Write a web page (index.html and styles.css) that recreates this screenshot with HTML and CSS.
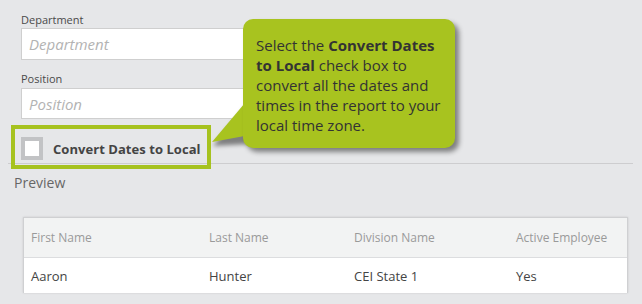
FILE: index.html
```html
<!DOCTYPE html>
<html>
<head>
<meta charset="utf-8">
<link rel="stylesheet" href="styles.css">
</head>
<body>
<div class="page">
  <div class="form">
    <label class="field-label">Department</label>
    <div class="input placeholder">Department</div>
    <label class="field-label second">Position</label>
    <div class="input placeholder short">Position</div>
    <div class="check-row">
      <span class="checkbox"></span>
      <span class="check-label">Convert Dates to Local</span>
    </div>
  </div>
  <div class="divider"></div>
  <div class="preview-title">Preview</div>
  <div class="card">
    <div class="grid head">
      <div>First Name</div>
      <div>Last Name</div>
      <div>Division Name</div>
      <div>Active Employee</div>
    </div>
    <div class="grid row">
      <div>Aaron</div>
      <div>Hunter</div>
      <div>CEI State 1</div>
      <div>Yes</div>
    </div>
  </div>
</div>

<div class="highlight"></div>
<svg class="tail" width="60" height="70" viewBox="0 0 60 70">
  <defs>
    <filter id="blur" x="-50%" y="-50%" width="200%" height="200%">
      <feGaussianBlur stdDeviation="2"/>
    </filter>
  </defs>
  <polygon points="13,54 50,10 50,52" fill="rgba(0,0,0,0.45)" filter="url(#blur)"/>
  <polygon points="12,50 50,5 50,43" fill="#a8c31f"/>
</svg>
<div class="tooltip">Select the <b>Convert Dates to Local</b> check box to convert all the dates and times in the report to your local time zone.</div>
</body>
</html>
```

FILE: styles.css
```css
html, body {
  margin: 0;
  padding: 0;
  background: #e6e7e9;
  font-family: "Open Sans", "DejaVu Sans", sans-serif;
  width: 642px;
  height: 304px;
  overflow: hidden;
}

.page {
  padding: 0 9px 0 8px;
}

.form {
  padding: 13px 0 0 13px;
  display: flex;
  flex-direction: column;
  align-items: flex-start;
}

.field-label {
  font-size: 11px;
  line-height: 14px;
  height: 14px;
  color: #4a4a4a;
  margin-bottom: 1px;
}

.field-label.second {
  margin-top: 12px;
  margin-bottom: 2px;
}

.input {
  box-sizing: border-box;
  width: 410px;
  height: 32px;
  background: #fff;
  border: 1px solid #cfcfcf;
  padding: 0 7px;
  display: flex;
  align-items: center;
}

.input.short {
  height: 31px;
}

.placeholder {
  font-size: 15px;
  font-style: italic;
  color: #b3b3b3;
}

.check-row {
  margin-top: 18px;
  display: flex;
  align-items: center;
  height: 23px;
}

.checkbox {
  box-sizing: border-box;
  width: 22px;
  height: 23px;
  border: 4px solid #c2c3c5;
  background: #fff;
}

.check-label {
  margin-left: 10px;
  font-size: 13px;
  font-weight: bold;
  color: #444;
  letter-spacing: 0.05px;
}

.divider {
  margin-top: 3px;
  height: 1px;
  background: #cdcdcf;
}

.preview-title {
  margin-top: 9px;
  padding-left: 6px;
  font-size: 14px;
  line-height: 20px;
  color: #666;
}

.card {
  margin: 24px 5px 0 15px;
  background: #fff;
  border: 1px solid #cfd0d2;
  border-bottom: none;
  box-shadow: 0 0 2px rgba(0, 0, 0, 0.12);
}

.grid {
  display: grid;
  grid-template-columns: 178px 145px 162px 1fr;
  padding-left: 7px;
  align-items: center;
}

.head {
  height: 39px;
  background: #f2f3f3;
  border-bottom: 1px solid #dcdddf;
  font-size: 12px;
  color: #9a9a9a;
}

.row {
  height: 35px;
  font-size: 13px;
  color: #444;
}

.highlight {
  position: absolute;
  left: 11px;
  top: 125px;
  width: 192px;
  height: 36px;
  border: 4px solid #a6c21f;
}

.tail {
  position: absolute;
  left: 200px;
  top: 92px;
}

.tooltip {
  position: absolute;
  left: 243px;
  top: 19px;
  box-sizing: border-box;
  width: 212px;
  height: 129px;
  padding: 16px 13px 0 13px;
  background: #a8c31f;
  border-radius: 10px;
  box-shadow: 4px 4px 5px rgba(0, 0, 0, 0.45);
  font-size: 15px;
  line-height: 20px;
  color: #333;
}

.tooltip b {
  color: #333;
}
```
